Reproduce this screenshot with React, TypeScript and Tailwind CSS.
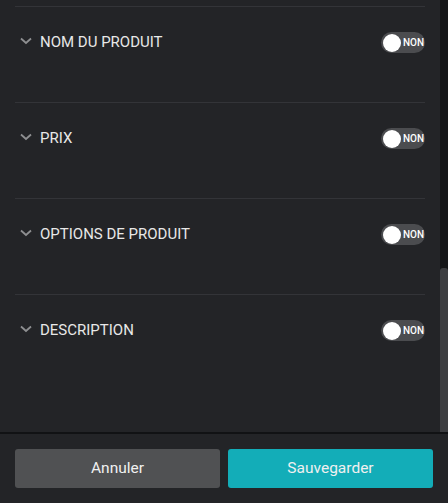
const sections = ["NOM DU PRODUIT", "PRIX", "OPTIONS DE PRODUIT", "DESCRIPTION"];

function Toggle() {
  return (
    <div className="flex h-[21px] w-[44px] items-center rounded-full bg-[#4b4c4f] pl-[2px]">
      <div className="h-[18px] w-[18px] rounded-full bg-white" />
      <span className="ml-[2px] text-[10px] font-medium text-white">NON</span>
    </div>
  );
}

function Chevron() {
  return (
    <svg width="12" height="8" viewBox="0 0 12 8" className="-mt-[3px] text-[#8e8f91]">
      <path d="M1 1.5 L6 6 L11 1.5" fill="none" stroke="currentColor" strokeWidth="1.8" />
    </svg>
  );
}

export default function App() {
  return (
    <div className="flex h-[503px] w-[448px] flex-col bg-[#232427] font-['Roboto',sans-serif]">
      <div className="flex h-[432px] w-full">
        <div className="flex-1 overflow-hidden">
          <div className="mx-[15px] mt-[6px]">
            {sections.map((s) => (
              <div key={s} className="h-[96px] border-t border-[#333438]">
                <div className="flex items-center justify-between pt-[25px]">
                  <div className="flex items-center gap-[8px] pl-[5px]">
                    <Chevron />
                    <span className="-mt-[1px] text-[15px] text-[#e8e8e8]">{s}</span>
                  </div>
                  <Toggle />
                </div>
              </div>
            ))}
          </div>
        </div>
        <div className="flex w-[8px] flex-col bg-[#151618]">
          <div className="mt-[268px] flex-1 rounded-t-[3px] bg-[#3d3e41]" />
        </div>
      </div>
      <div className="h-[2px] bg-[#111214]" />
      <div className="flex gap-[8px] px-[15px] pt-[15px]">
        <button className="h-[39px] flex-1 rounded-[3px] bg-[#505153] text-[15.5px] text-[#f0f0f0]">Annuler</button>
        <button className="h-[39px] flex-1 rounded-[3px] bg-[#13adb8] text-[15.5px] text-[#f0f0f0]">Sauvegarder</button>
      </div>
    </div>
  );
}
